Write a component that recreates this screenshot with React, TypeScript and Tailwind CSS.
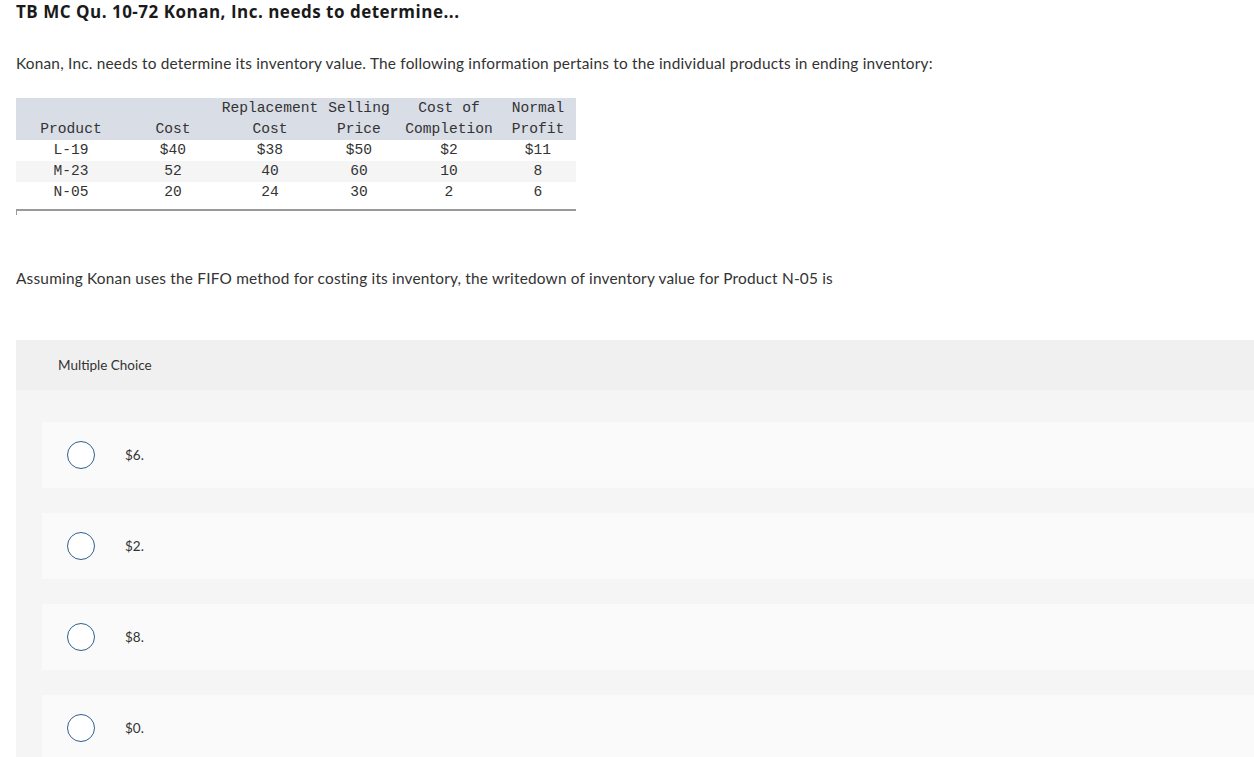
const columns = [
  { top: "", bottom: "Product", w: "w-[110px]" },
  { top: "", bottom: "Cost", w: "w-[94px]" },
  { top: "Replacement", bottom: "Cost", w: "w-[100px]" },
  { top: "Selling", bottom: "Price", w: "w-[78px]" },
  { top: "Cost of", bottom: "Completion", w: "w-[102px]" },
  { top: "Normal", bottom: "Profit", w: "w-[76px]" },
];

const rows = [
  ["L-19", "$40", "$38", "$50", "$2", "$11"],
  ["M-23", "52", "40", "60", "10", "8"],
  ["N-05", "20", "24", "30", "2", "6"],
];

const choices = ["$6.", "$2.", "$8.", "$0."];

export default function App() {
  return (
    <div className="min-h-screen bg-white text-[#333] overflow-hidden" style={{ fontFamily: "Lato, 'Open Sans', sans-serif" }}>
      <div className="pl-4">
        <h1
          className="pt-[2px] text-[17px] font-bold leading-[20px] text-[#1a1a1a] tracking-[0.5px]"
          style={{ fontFamily: "'Open Sans', Lato, sans-serif" }}
        >
          TB MC Qu. 10-72 Konan, Inc. needs to determine...
        </h1>
        <p className="mt-[31px] text-[15.4px] leading-[20px] tracking-[0.2px] text-[#333]">
          Konan, Inc. needs to determine its inventory value. The following information pertains to the individual products in ending inventory:
        </p>

        {/* Table */}
        <div className="mt-[25px] w-[560px]" style={{ fontFamily: "'Liberation Mono', monospace" }}>
          <div className="flex bg-[#d9dde6] text-[14.6px] text-[#333]">
            {columns.map((c, i) => (
              <div key={i} className={`${c.w} text-center leading-[21px]`}>
                <div className="whitespace-pre">{c.top || " "}</div>
                <div>{c.bottom}</div>
              </div>
            ))}
          </div>
          {rows.map((r, ri) => (
            <div key={ri} className={`flex text-[14.6px] leading-[21px] ${ri === 1 ? "bg-[#f5f5f5]" : "bg-white"}`}>
              {r.map((cell, ci) => (
                <div key={ci} className={`${columns[ci].w} text-center`}>
                  {cell}
                </div>
              ))}
            </div>
          ))}
          <div className="mt-[6px] h-[6px] border-t-2 border-l border-[#9a9a9a]" />
        </div>

        <p className="mt-[53px] text-[15.4px] leading-[20px] tracking-[0.2px] text-[#333]">
          Assuming Konan uses the FIFO method for costing its inventory, the writedown of inventory value for Product N-05 is
        </p>

        {/* Multiple choice */}
        <div className="mt-[52px] bg-[#f5f5f5]">
          <div className="h-[50px] bg-[#f0f0f0] flex items-center pl-[42px] text-[13.5px] text-[#333]">
            Multiple Choice
          </div>
          <div className="pl-[26px] pt-[32px] flex flex-col gap-[25px]">
            {choices.map((c) => (
              <div key={c} className="h-[66px] bg-[#fafafa] flex items-center pl-[25px]">
                <span className="w-[28px] h-[28px] rounded-full border-[1.5px] border-[#2e5f8f] bg-white" />
                <span className="ml-[30px] text-[13.5px] text-[#333]">{c}</span>
              </div>
            ))}
          </div>
        </div>
      </div>
    </div>
  );
}
